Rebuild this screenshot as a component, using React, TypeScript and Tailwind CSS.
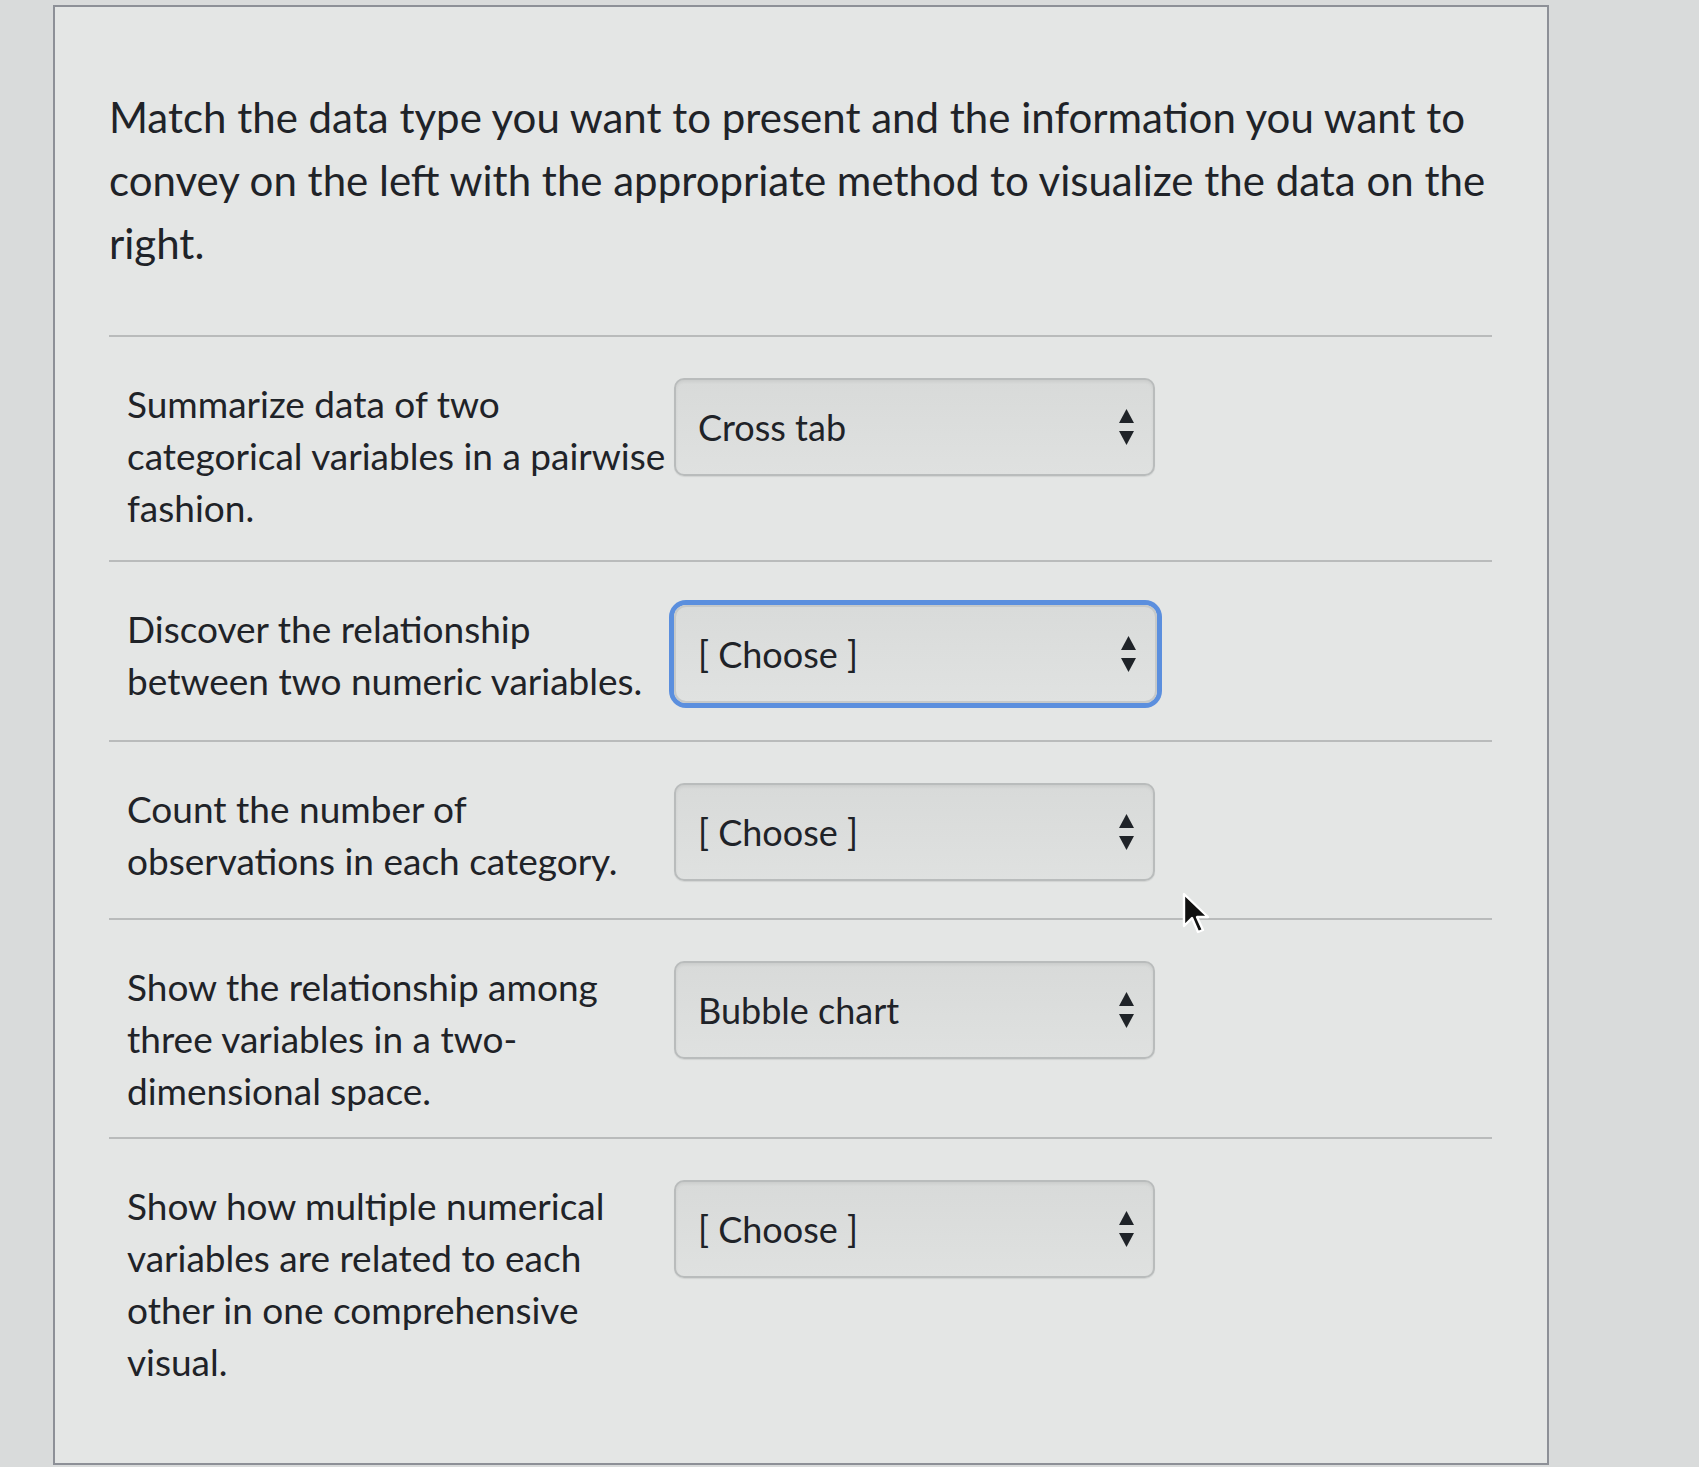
import React from "react";

const rows = [
  { lines: ["Summarize data of two", "categorical variables in a pairwise", "fashion."], value: "Cross tab", focus: false, pb: "pb-[26px]" },
  { lines: ["Discover the relationship", "between two numeric variables."], value: "[ Choose ]", focus: true, pb: "pb-[33px]" },
  { lines: ["Count the number of", "observations in each category."], value: "[ Choose ]", focus: false, pb: "pb-[31px]" },
  { lines: ["Show the relationship among", "three variables in a two-", "dimensional space."], value: "Bubble chart", focus: false, pb: "pb-[20px]" },
  { lines: ["Show how multiple numerical", "variables are related to each", "other in one comprehensive", "visual."], value: "[ Choose ]", focus: false, pb: "pb-[40px]" },
];

function Arrows() {
  return (
    <svg width="17" height="38" viewBox="0 0 17 38" className="shrink-0">
      <polygon points="1,15 8.5,1 16,15" fill="#1f2328" />
      <polygon points="1,23 8.5,37 16,23" fill="#1f2328" />
    </svg>
  );
}

function Select({ value, focus }: { value: string; focus: boolean }) {
  return (
    <div
      className={
        focus
          ? "w-[483px] h-[98px] rounded-[12px] border-2 border-[#c6c9c9] bg-gradient-to-b from-[#d9dbda] to-[#e0e2e1] shadow-[0_0_0_5px_#5b8fde] flex items-center justify-between pl-[22px] pr-[18px] mt-[2px]"
          : "w-[481px] h-[98px] rounded-[10px] border-2 border-[#b9bcbc] bg-gradient-to-b from-[#d8dad9] to-[#dfe1e0] shadow-[inset_0_2px_3px_rgba(0,0,0,0.06),0_1px_1px_rgba(0,0,0,0.08)] flex items-center justify-between pl-[22px] pr-[18px]"
      }
    >
      <span className="text-[36px] leading-none text-[#1f2328]">{value}</span>
      <Arrows />
    </div>
  );
}

function Cursor() {
  return (
    <svg
      className="absolute left-[1182px] top-[892px]"
      width="28"
      height="44"
      viewBox="0 0 14 22"
    >
      <path
        d="M1 1 L1 17 L5 13 L8 20 L10.5 19 L7.5 12.5 L13 12.5 Z"
        fill="#111"
        stroke="#fff"
        strokeWidth="1.2"
        strokeLinejoin="round"
      />
    </svg>
  );
}

export default function App() {
  return (
    <div
      className="relative w-[1699px] h-[1467px] overflow-hidden bg-[#d9dbdb] pl-[53px] pt-[5px]"
      style={{ fontFamily: "Lato, 'Open Sans', sans-serif" }}
    >
      <div className="w-[1496px] h-[1460px] border-2 border-[#8d9097] bg-[#e4e6e5] pl-[54px] pt-[79px] text-[#1f2328]">
        <p className="text-[42px] leading-[63px] w-[1420px] whitespace-nowrap">
          Match the data type you want to present and the information you want to
          <br />
          convey on the left with the appropriate method to visualize the data on the
          <br />
          right.
        </p>
        <div className="mt-[60px] w-[1383px]">
          {rows.map((r, i) => (
            <div key={i} className="border-t-2 border-[#b9bbbb]">
              <div className={"flex items-start pt-[41px] pl-[18px] " + r.pb}>
                <div className="w-[547px] text-[37px] leading-[52px] shrink-0 whitespace-nowrap">
                  {r.lines.map((l, j) => (
                    <div key={j}>{l}</div>
                  ))}
                </div>
                <Select value={r.value} focus={r.focus} />
              </div>
            </div>
          ))}
        </div>
      </div>
      <Cursor />
    </div>
  );
}
